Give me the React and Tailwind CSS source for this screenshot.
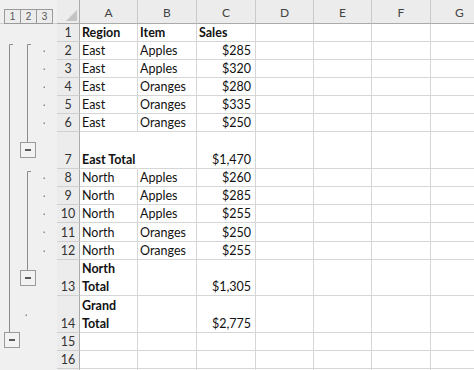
import React from "react";

const COLS = [
  { k: "A", w: "w-[58px]" },
  { k: "B", w: "w-[59px]" },
  { k: "C", w: "w-[59px]" },
  { k: "D", w: "w-[58px]" },
  { k: "E", w: "w-[58px]" },
  { k: "F", w: "w-[59px]" },
  { k: "G", w: "w-[58px]" },
];

const ROWS = [
  { n: "1", h: "h-[18px]", a: "Region", b: "Item", c: "Sales", bold: true, cLeft: true },
  { n: "2", h: "h-[18px]", a: "East", b: "Apples", c: "$285" },
  { n: "3", h: "h-[18px]", a: "East", b: "Apples", c: "$320" },
  { n: "4", h: "h-[18px]", a: "East", b: "Oranges", c: "$280" },
  { n: "5", h: "h-[18px]", a: "East", b: "Oranges", c: "$335" },
  { n: "6", h: "h-[18px]", a: "East", b: "Oranges", c: "$250" },
  { n: "7", h: "h-[37px]", a: "East Total", b: "", c: "$1,470", aBold: true, overflow: true },
  { n: "8", h: "h-[18px]", a: "North", b: "Apples", c: "$260" },
  { n: "9", h: "h-[18px]", a: "North", b: "Apples", c: "$285" },
  { n: "10", h: "h-[18px]", a: "North", b: "Apples", c: "$255" },
  { n: "11", h: "h-[19px]", a: "North", b: "Oranges", c: "$250" },
  { n: "12", h: "h-[18px]", a: "North", b: "Oranges", c: "$255" },
  { n: "13", h: "h-[36px]", a: ["North", "Total"], b: "", c: "$1,305", aBold: true },
  { n: "14", h: "h-[37px]", a: ["Grand", "Total"], b: "", c: "$2,775", aBold: true },
  { n: "15", h: "h-[18px]", a: "", b: "", c: "" },
  { n: "16", h: "h-[18px]", a: "", b: "", c: "" },
  { n: "", h: "h-[18px]", a: "", b: "", c: "" },
];

function MinusBox({ x, y }) {
  return (
    <g>
      <rect x={x + 0.5} y={y + 0.5} width="15" height="15" fill="#f2f2f2" stroke="#9a9a9a" />
      <rect x={x + 5} y={y + 7} width="6" height="2" fill="#5a5a5a" />
    </g>
  );
}

function Outline() {
  const o = 24;
  const dots1 = [51, 69, 87, 105, 123, 178, 196, 214, 232, 251];
  return (
    <svg width="57" height="346" className="block shrink-0" viewBox={`0 ${o} 57 346`}>
      <rect x="0" y={o} width="57" height="346" fill="#f0f0f0" />
      <path d="M13 44.5 H9.5 V332" stroke="#8c8c8c" fill="none" />
      <MinusBox x={4} y={332} />
      <path d="M31 44.5 H27.5 V142" stroke="#8c8c8c" fill="none" />
      <MinusBox x={20} y={142} />
      <path d="M31 171.5 H27.5 V270" stroke="#8c8c8c" fill="none" />
      <MinusBox x={20} y={270} />
      {dots1.map((y) => (
        <rect key={y} x="43.5" y={y - 0.5} width="1.5" height="1.5" fill="#8a8a8a" />
      ))}
      <rect x="25.5" y="314.5" width="1.5" height="1.5" fill="#8a8a8a" />
    </svg>
  );
}

function Cell({ w, children, right, bold, noRight, overflow }) {
  return (
    <div
      className={`${w} shrink-0 h-full border-b border-[#d6d6d6] ${noRight ? "border-r border-r-transparent" : "border-r border-r-[#d6d6d6]"} flex flex-col justify-end ${right ? "items-end pr-[4px]" : "items-start pl-[2px]"} ${bold ? "font-bold" : ""} ${overflow ? "overflow-visible relative z-10" : "overflow-hidden"}`}
    >
      {Array.isArray(children)
        ? children.map((t, i) => (
            <div key={i} className="leading-[18px] whitespace-nowrap translate-y-[1px]">
              {t}
            </div>
          ))
        : (
          <div className="leading-[18px] whitespace-nowrap translate-y-[1px]">{children}</div>
        )}
    </div>
  );
}

export default function App() {
  return (
    <div
      className="w-[474px] h-[370px] overflow-hidden bg-white text-[12.5px] text-[#111]"
      style={{ fontFamily: "Lato, 'Liberation Sans', sans-serif" }}
    >
      <div className="flex h-[24px]">
        <div className="w-[57px] shrink-0 bg-[#f0f0f0] border-b border-[#d0d0d0] flex items-start pl-[4px] pt-[9px]">
          {["1", "2", "3"].map((l) => (
            <div
              key={l}
              className="w-[17px] h-[15px] -mr-px border border-[#9a9a9a] bg-[#ececec] text-[#555] text-[10px] leading-[13px] text-center"
              style={{ fontFamily: "'Liberation Sans', sans-serif" }}
            >
              {l}
            </div>
          ))}
        </div>
        <div className="w-[23px] shrink-0 bg-[#ececec] border-b border-r border-[#ababab] relative">
          <svg width="23" height="24" className="absolute left-0 top-0">
            <polygon points="20,10 20,21 9,21" fill="#c4c4c4" />
          </svg>
        </div>
        {COLS.map((c) => (
          <div
            key={c.k}
            className={`${c.w} shrink-0 bg-[#ececec] border-b border-b-[#ababab] border-r border-r-[#cacaca] flex items-center justify-center pt-[2px] text-[#444] text-[12px]`}
          >
            {c.k}
          </div>
        ))}
      </div>
      <div className="flex">
        <Outline />
        <div className="flex flex-col">
          {ROWS.map((r, i) => (
            <div key={i} className={`flex ${r.h}`}>
              <div className="w-[23px] shrink-0 h-full bg-[#ececec] border-r border-r-[#ababab] border-b border-b-[#d0d0d0] flex items-end justify-center text-[#333] text-[12.5px] leading-[18px]">
                <span className="translate-y-[1px]">{r.n}</span>
              </div>
              <Cell w="w-[58px]" bold={r.bold || r.aBold} noRight={r.overflow} overflow={r.overflow}>
                {r.a}
              </Cell>
              <Cell w="w-[59px]" bold={r.bold}>
                {r.b}
              </Cell>
              <Cell w="w-[59px]" bold={r.bold} right={!r.cLeft}>
                {r.c}
              </Cell>
              <Cell w="w-[58px]" />
              <Cell w="w-[58px]" />
              <Cell w="w-[59px]" />
              <Cell w="w-[58px]" />
            </div>
          ))}
        </div>
      </div>
    </div>
  );
}
